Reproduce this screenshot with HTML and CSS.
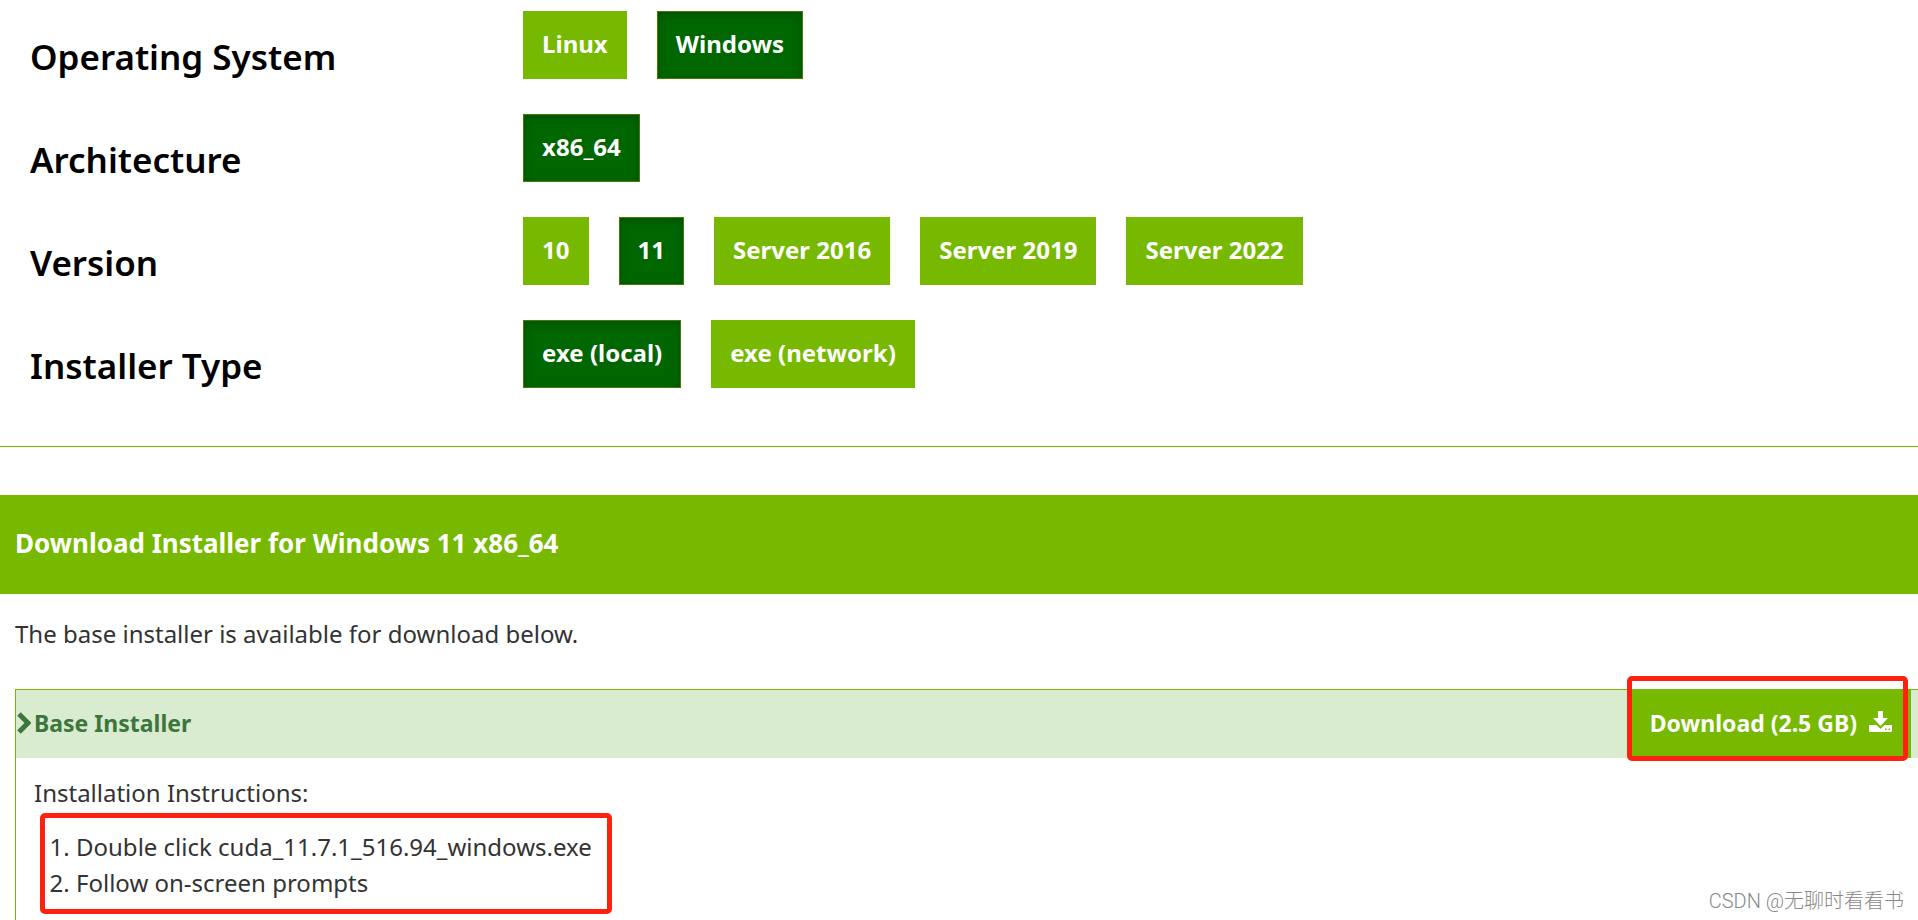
FILE: index.html
```html
<!DOCTYPE html>
<html lang="en">
<head>
  <meta charset="UTF-8" />
  <meta name="viewport" content="width=device-width, initial-scale=1" />
  <title>Download Installer</title>
  <link rel="stylesheet" href="styles.css">
</head>
<body>

  <section class="selector">
    <div class="selector-row">
      <h3>Operating System</h3>
      <div class="options">
        <button type="button" class="option">Linux</button>
        <button type="button" class="option active">Windows</button>
      </div>
    </div>
    <div class="selector-row">
      <h3>Architecture</h3>
      <div class="options">
        <button type="button" class="option active">x86_64</button>
      </div>
    </div>
    <div class="selector-row">
      <h3>Version</h3>
      <div class="options">
        <button type="button" class="option">10</button>
        <button type="button" class="option active">11</button>
        <button type="button" class="option">Server 2016</button>
        <button type="button" class="option">Server 2019</button>
        <button type="button" class="option">Server 2022</button>
      </div>
    </div>
    <div class="selector-row">
      <h3>Installer Type</h3>
      <div class="options">
        <button type="button" class="option active">exe (local)</button>
        <button type="button" class="option">exe (network)</button>
      </div>
    </div>
  </section>

  <h4 class="banner">Download Installer for Windows 11 x86_64</h4>
  <p class="intro">The base installer is available for download below.</p>

  <section class="installer">
    <div class="installer-header">
      <svg class="chevron" viewBox="0 0 14 22" aria-hidden="true">
        <path d="M2 2L11 11L2 20" />
      </svg>
      <h5>Base Installer</h5>
      <a href="#" class="download">
        Download (2.5 GB)
        <svg class="download-icon" viewBox="0 0 24 22" aria-hidden="true">
          <path d="M9 0h5v7h5l-7.500 8L4 7h5z" />
          <path fill-rule="evenodd" d="M1 14h6.500l4 4 4-4H22a1 1 0 0 1 1 1v5a1 1 0 0 1-1 1H1a1 1 0 0 1-1-1v-5a1 1 0 0 1 1-1zM16 17.500v1.500h1.500v-1.500zM19.500 17.500v1.500H21v-1.500z" />
        </svg>
      </a>
    </div>
    <div class="installer-body">
      <p>Installation Instructions:</p>
      <ol class="steps">
        <li>Double click cuda_11.7.1_516.94_windows.exe</li>
        <li>Follow on-screen prompts</li>
      </ol>
    </div>
  </section>

  <div class="watermark">CSDN @无聊时看看书</div>

</body>
</html>
```

FILE: styles.css
```css
* {
  margin: 0;
  padding: 0;
  box-sizing: border-box;
}

body {
  display: flex;
  flex-direction: column;
  min-height: 100vh;
  font-family: "Noto Sans", sans-serif;
  font-size: 24px;
  line-height: 36px;
  color: #333;
  background: #fff;
}

a {
  text-decoration: none;
  color: inherit;
}

/* Platform selector */
.selector {
  display: flex;
  flex-direction: column;
  gap: 35px;
  padding: 11px 0 58px;
  border-bottom: 1px solid #76b900;
}

.selector-row {
  display: grid;
  grid-template-columns: 3fr 8fr;
}

.selector-row h3 {
  padding: 24px 0 0 30px;
  font-size: 35px;
  font-weight: 600;
  line-height: 44px;
  color: #000;
}

.options {
  display: flex;
  gap: 30px;
}

.option {
  height: 68px;
  padding: 0 18px 4px;
  border: 1px solid #76b900;
  background: #76b900;
  color: #fff;
  font-family: inherit;
  font-size: 24px;
  font-weight: 700;
  cursor: pointer;
}

.option.active {
  background: #060;
  border-color: #4a7a00;
  box-shadow: inset 0 3px 10px rgba(0, 0, 0, 0.2);
}

/* Installer download */
.banner {
  margin-top: 48px;
  padding: 30px 15px 33px;
  background: #76b900;
  color: #fff;
  font-size: 26px;
  font-weight: 700;
}

.intro {
  padding: 22px 15px 37px;
}

.installer {
  flex: 1;
  margin-left: 15px;
  border: solid #76b900;
  border-width: 1px 0 0 1px;
}

.installer-header {
  display: flex;
  align-items: center;
  height: 68px;
  padding-right: 7px;
  background: #d9ecd0;
  color: #3c763d;
  font-size: 23px;
  font-weight: 700;
}

.installer-header h5 {
  flex: 1;
  padding-bottom: 2px;
  font-size: inherit;
}

.chevron {
  width: 14px;
  height: 22px;
  margin: 0 3px 2px 1px;
  fill: none;
  stroke: currentColor;
  stroke-width: 5;
}

.download {
  position: relative;
  display: flex;
  align-items: center;
  gap: 12px;
  height: 68px;
  padding: 0 18px 2px;
  background: #76b900;
  color: #fff;
}

.download-icon {
  width: 24px;
  height: 22px;
  margin-bottom: 2px;
  fill: currentColor;
}

/* red highlight frames */
.download::after,
.steps::after {
  content: "";
  position: absolute;
  border: 5px solid #ff2010;
  border-radius: 5px;
}

.download::after {
  inset: -14px 3px -3px -5px;
}

.installer-body {
  padding: 17px 18px 0;
}

.steps {
  position: relative;
  width: max-content;
  margin: 18px 0 0 6px;
  padding-left: 36px;
}

.steps::after {
  inset: -16px -20px -13px 0;
}

.watermark {
  position: absolute;
  right: 14px;
  bottom: 5px;
  font-family: Roboto, "Noto Sans CJK SC", sans-serif;
  font-size: 20px;
  font-weight: 300;
  line-height: 28px;
  color: #888;
}
```
